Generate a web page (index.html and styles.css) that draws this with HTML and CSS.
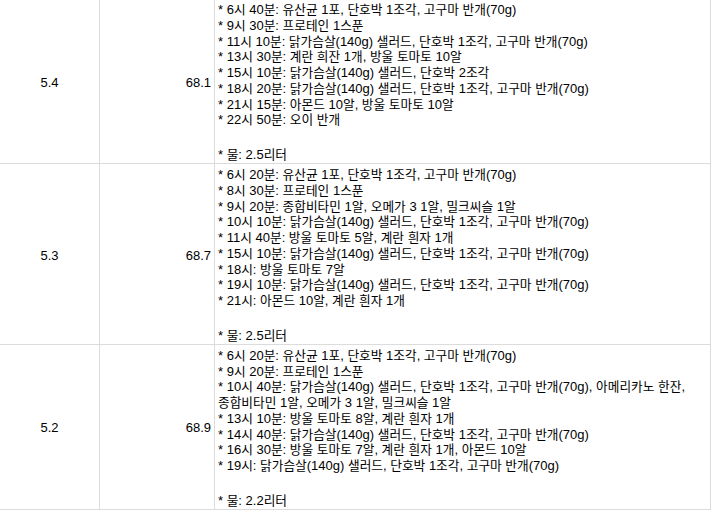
FILE: index.html
```html
<!DOCTYPE html>
<html lang="ko">
<head>
<meta charset="utf-8">
<title>식단 기록</title>
<link rel="stylesheet" href="styles.css">
</head>
<body>
<table class="sheet">
  <colgroup>
    <col class="c-date">
    <col class="c-weight">
    <col class="c-log">
  </colgroup>
  <tbody>
    <tr>
      <td class="date">5.4</td>
      <td class="weight">68.1</td>
      <td class="log">
        <p class="meals">* 6<span class="k">시</span> 40<span class="k">분</span>: <span class="k">유산균</span> 1<span class="k">포</span>, <span class="k">단호박</span> 1<span class="k">조각</span>, <span class="k">고구마</span> <span class="k">반개</span>(70g)<br>* 9<span class="k">시</span> 30<span class="k">분</span>: <span class="k">프로테인</span> 1<span class="k">스푼</span><br>* 11<span class="k">시</span> 10<span class="k">분</span>: <span class="k">닭가슴살</span>(140g) <span class="k">샐러드</span>, <span class="k">단호박</span> 1<span class="k">조각</span>, <span class="k">고구마</span> <span class="k">반개</span>(70g)<br>* 13<span class="k">시</span> 30<span class="k">분</span>: <span class="k">계란</span> <span class="k">희잔</span> 1<span class="k">개</span>, <span class="k">방울</span> <span class="k">토마토</span> 10<span class="k">알</span><br>* 15<span class="k">시</span> 10<span class="k">분</span>: <span class="k">닭가슴살</span>(140g) <span class="k">샐러드</span>, <span class="k">단호박</span> 2<span class="k">조각</span><br>* 18<span class="k">시</span> 20<span class="k">분</span>: <span class="k">닭가슴살</span>(140g) <span class="k">샐러드</span>, <span class="k">단호박</span> 1<span class="k">조각</span>, <span class="k">고구마</span> <span class="k">반개</span>(70g)<br>* 21<span class="k">시</span> 15<span class="k">분</span>: <span class="k">아몬드</span> 10<span class="k">알</span>, <span class="k">방울</span> <span class="k">토마토</span> 10<span class="k">알</span><br>* 22<span class="k">시</span> 50<span class="k">분</span>: <span class="k">오이</span> <span class="k">반개</span></p>
        <p class="water">* <span class="k">물</span>: 2.5<span class="k">리터</span></p>
      </td>
    </tr>
    <tr>
      <td class="date">5.3</td>
      <td class="weight">68.7</td>
      <td class="log">
        <p class="meals">* 6<span class="k">시</span> 20<span class="k">분</span>: <span class="k">유산균</span> 1<span class="k">포</span>, <span class="k">단호박</span> 1<span class="k">조각</span>, <span class="k">고구마</span> <span class="k">반개</span>(70g)<br>* 8<span class="k">시</span> 30<span class="k">분</span>: <span class="k">프로테인</span> 1<span class="k">스푼</span><br>* 9<span class="k">시</span> 20<span class="k">분</span>: <span class="k">종합비타민</span> 1<span class="k">알</span>, <span class="k">오메가</span> 3 1<span class="k">알</span>, <span class="k">밀크씨슬</span> 1<span class="k">알</span><br>* 10<span class="k">시</span> 10<span class="k">분</span>: <span class="k">닭가슴살</span>(140g) <span class="k">샐러드</span>, <span class="k">단호박</span> 1<span class="k">조각</span>, <span class="k">고구마</span> <span class="k">반개</span>(70g)<br>* 11<span class="k">시</span> 40<span class="k">분</span>: <span class="k">방울</span> <span class="k">토마토</span> 5<span class="k">알</span>, <span class="k">계란</span> <span class="k">흰자</span> 1<span class="k">개</span><br>* 15<span class="k">시</span> 10<span class="k">분</span>: <span class="k">닭가슴살</span>(140g) <span class="k">샐러드</span>, <span class="k">단호박</span> 1<span class="k">조각</span>, <span class="k">고구마</span> <span class="k">반개</span>(70g)<br>* 18<span class="k">시</span>: <span class="k">방울</span> <span class="k">토마토</span> 7<span class="k">알</span><br>* 19<span class="k">시</span> 10<span class="k">분</span>: <span class="k">닭가슴살</span>(140g) <span class="k">샐러드</span>, <span class="k">단호박</span> 1<span class="k">조각</span>, <span class="k">고구마</span> <span class="k">반개</span>(70g)<br>* 21<span class="k">시</span>: <span class="k">아몬드</span> 10<span class="k">알</span>, <span class="k">계란</span> <span class="k">흰자</span> 1<span class="k">개</span></p>
        <p class="water">* <span class="k">물</span>: 2.5<span class="k">리터</span></p>
      </td>
    </tr>
    <tr>
      <td class="date">5.2</td>
      <td class="weight">68.9</td>
      <td class="log">
        <p class="meals">* 6<span class="k">시</span> 20<span class="k">분</span>: <span class="k">유산균</span> 1<span class="k">포</span>, <span class="k">단호박</span> 1<span class="k">조각</span>, <span class="k">고구마</span> <span class="k">반개</span>(70g)<br>* 9<span class="k">시</span> 20<span class="k">분</span>: <span class="k">프로테인</span> 1<span class="k">스푼</span><br>* 10<span class="k">시</span> 40<span class="k">분</span>: <span class="k">닭가슴살</span>(140g) <span class="k">샐러드</span>, <span class="k">단호박</span> 1<span class="k">조각</span>, <span class="k">고구마</span> <span class="k">반개</span>(70g), <span class="k">아메리카노</span> <span class="k">한잔</span>, <span class="k">종합비타민</span> 1<span class="k">알</span>, <span class="k">오메가</span> 3 1<span class="k">알</span>, <span class="k">밀크씨슬</span> 1<span class="k">알</span><br>* 13<span class="k">시</span> 10<span class="k">분</span>: <span class="k">방울</span> <span class="k">토마토</span> 8<span class="k">알</span>, <span class="k">계란</span> <span class="k">흰자</span> 1<span class="k">개</span><br>* 14<span class="k">시</span> 40<span class="k">분</span>: <span class="k">닭가슴살</span>(140g) <span class="k">샐러드</span>, <span class="k">단호박</span> 1<span class="k">조각</span>, <span class="k">고구마</span> <span class="k">반개</span>(70g)<br>* 16<span class="k">시</span> 30<span class="k">분</span>: <span class="k">방울</span> <span class="k">토마토</span> 7<span class="k">알</span>, <span class="k">계란</span> <span class="k">흰자</span> 1<span class="k">개</span>, <span class="k">아몬드</span> 10<span class="k">알</span><br>* 19<span class="k">시</span>: <span class="k">닭가슴살</span>(140g) <span class="k">샐러드</span>, <span class="k">단호박</span> 1<span class="k">조각</span>, <span class="k">고구마</span> <span class="k">반개</span>(70g)</p>
        <p class="water">* <span class="k">물</span>: 2.2<span class="k">리터</span></p>
      </td>
    </tr>
  </tbody>
</table>
</body>
</html>
```

FILE: styles.css
```css
html, body {
  margin: 0;
  padding: 0;
  background: #ffffff;
  overflow: hidden;
}

body {
  font-family: "Liberation Sans", Arial, "Noto Sans CJK KR", sans-serif;
  font-size: 13px;
  color: #000000;
}

.sheet {
  border-collapse: collapse;
  table-layout: fixed;
  width: 711px;
  margin: -2px 0 0 -1px;
}

.c-date { width: 100px; }
.c-weight { width: 115px; }
.c-log { width: 496px; }

.sheet td {
  border: 1px solid #dcdcdc;
  padding: 3px 3px 0 3px;
  line-height: 15.75px;
  vertical-align: middle;
}

.date {
  text-align: center;
}

.weight {
  text-align: right;
}

.log {
  text-align: left;
  word-break: keep-all;
  overflow-wrap: normal;
}

.meals,
.water {
  margin: 0;
  line-height: 15.75px;
}

.water {
  margin-top: 19.25px;
}

.k {
  font-family: "Noto Sans CJK KR", "Noto Sans CJK SC", sans-serif;
  font-size: 12.7px;
  line-height: 10px;
}
```
